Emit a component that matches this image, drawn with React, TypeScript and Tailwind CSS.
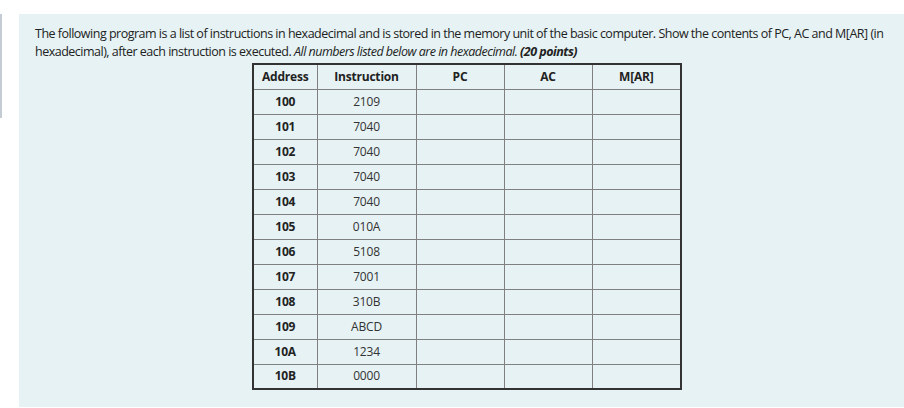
import React from "react";

const rows: [string, string][] = [
  ["100", "2109"],
  ["101", "7040"],
  ["102", "7040"],
  ["103", "7040"],
  ["104", "7040"],
  ["105", "010A"],
  ["106", "5108"],
  ["107", "7001"],
  ["108", "310B"],
  ["109", "ABCD"],
  ["10A", "1234"],
  ["10B", "0000"],
];

export default function App() {
  return (
    <div className="relative w-[904px] h-[408px] bg-white overflow-hidden" style={{ fontFamily: '"Open Sans", "Noto Sans", sans-serif' }}>
      <div className="absolute left-0 top-[14px] w-[2px] h-[104px] bg-[#c5cbd3]" />
      <div className="ml-[19px] pt-[14px]">
        <div className="bg-[#e6f2f4] h-[393px] pl-[16px] pr-[12px] pt-[11px] text-[#222]">
          <p className="text-[12.5px] leading-[18px] tracking-[-0.5px]">
            The following program is a list of instructions in hexadecimal and is stored in the memory unit of the basic computer. Show the contents of PC, AC and M[AR] (in hexadecimal), after each instruction is executed. <i>All numbers listed below are in hexadecimal.</i> <b><i>(20 points)</i></b>
          </p>
          <table className="ml-[217px] mt-[2px] border-collapse border-2 border-[#333] text-[12px] tracking-[-0.2px]">
            <thead>
              <tr className="h-[25px]">
                <th className="w-[64px] border border-[#808080] font-bold text-center">Address</th>
                <th className="w-[99px] border border-[#808080] font-bold text-center">Instruction</th>
                <th className="w-[88px] border border-[#808080] font-bold text-center">PC</th>
                <th className="w-[88px] border border-[#808080] font-bold text-center">AC</th>
                <th className="w-[89px] border border-[#808080] font-bold text-center">M[AR]</th>
              </tr>
            </thead>
            <tbody>
              {rows.map(([a, i]) => (
                <tr key={a} className="h-[25px]">
                  <td className="border border-[#808080] font-bold text-center">{a}</td>
                  <td className="border border-[#808080] text-center text-[#333]">{i}</td>
                  <td className="border border-[#808080]" />
                  <td className="border border-[#808080]" />
                  <td className="border border-[#808080]" />
                </tr>
              ))}
            </tbody>
          </table>
        </div>
      </div>
    </div>
  );
}
